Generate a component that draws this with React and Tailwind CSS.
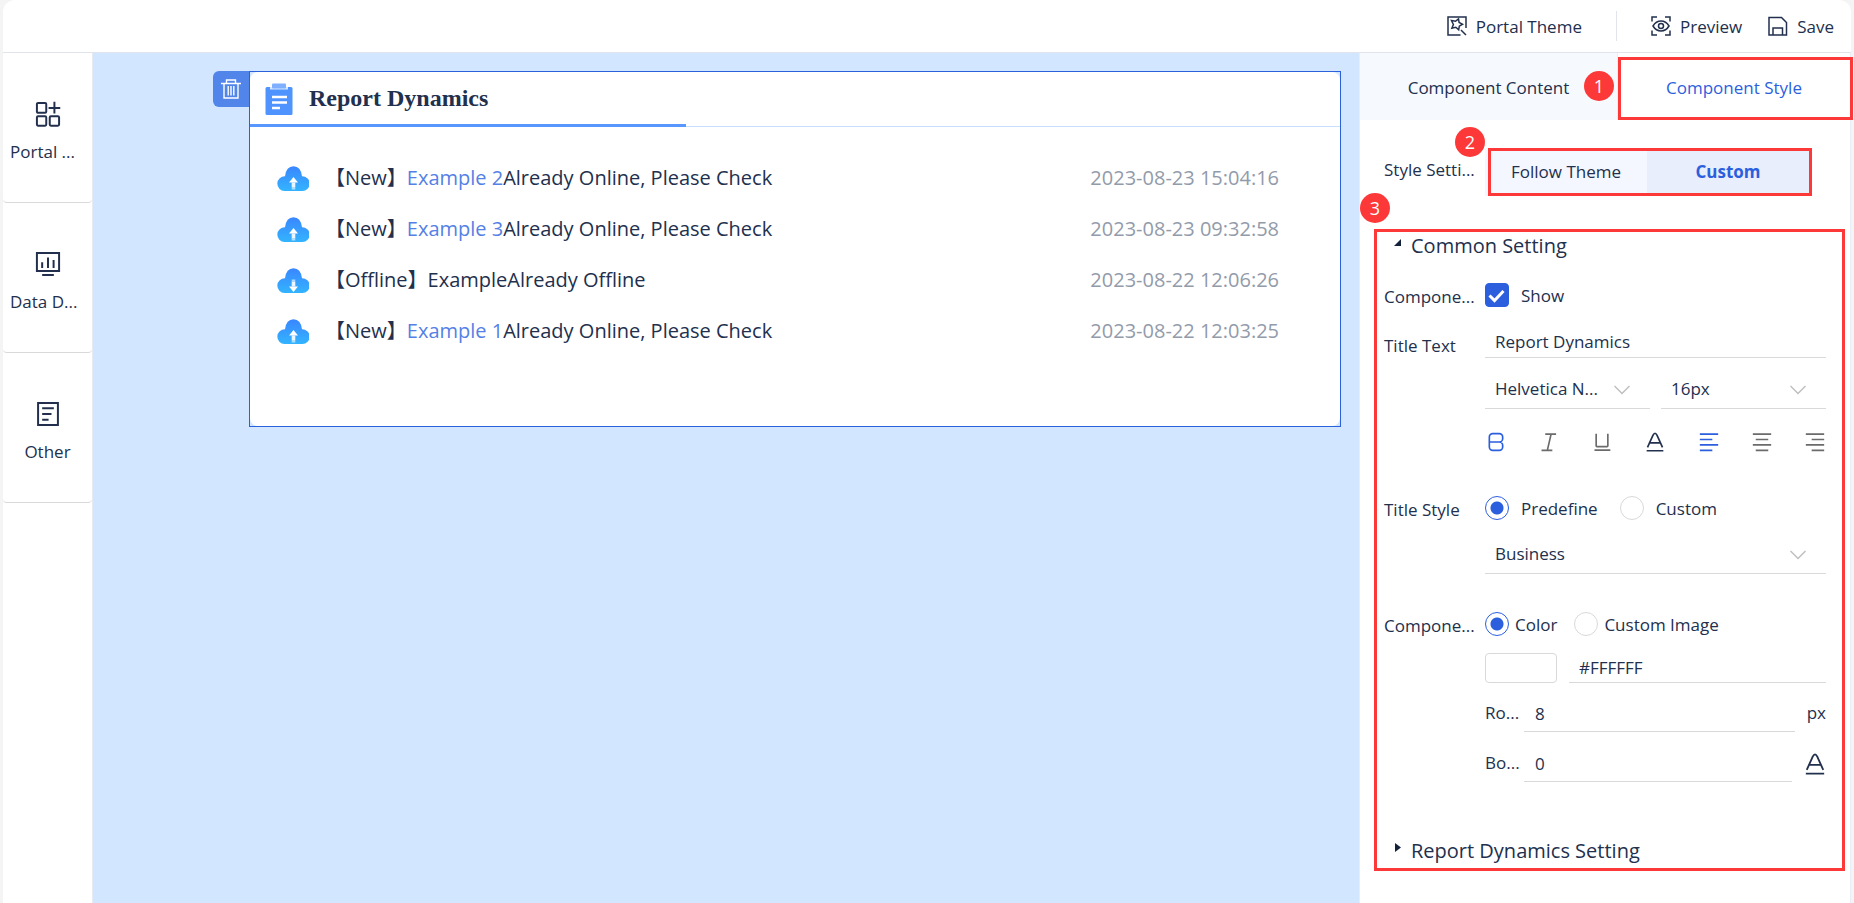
import { useState } from 'react';

/**
 * Line icons
 */
function Svg({ size = 24, width = 1.5, className = '', children }) {
    return (
        <svg
            viewBox="0 0 24 24"
            width={size}
            height={size}
            fill="none"
            stroke="currentColor"
            strokeWidth={width}
            className={`shrink-0 ${className}`}
            aria-hidden="true"
        >
            {children}
        </svg>
    );
}

const ThemeIcon = () => (
    <Svg>
        <path d="M21 14V3H3v18h12.500" />
        <path d="M6.500 6.500l4 .8 3-2.500.6 3.700 3.400 1.700-3.200 1.900-.6 3.700-2.900-2.500-3.900.9 1.500-3.700z" />
        <path d="M16 16l5 5" />
    </Svg>
);

const PreviewIcon = () => (
    <Svg>
        <path d="M3 7.500V3h5M16 3h5v4.500M21 16.500V21h-5M8 21H3v-4.500" />
        <path d="M4 12c2-3.300 4.800-5 8-5s6 1.700 8 5c-2 3.300-4.800 5-8 5s-6-1.700-8-5z" />
        <circle cx="12" cy="12" r="2.500" />
    </Svg>
);

const SaveIcon = () => (
    <Svg>
        <path d="M3 3.500h12.500L20.500 8.500V21H3z" />
        <path d="M7 21v-7h9.500v7" />
    </Svg>
);

const PortalIcon = () => (
    <Svg size={28} width={1.7}>
        <rect x="2.500" y="2.500" width="8" height="8.500" rx="1" />
        <rect x="2.500" y="14" width="8" height="8" rx="1" />
        <rect x="13.500" y="14" width="8" height="8" rx="1" />
        <path d="M17.500 1.500v10M12.500 6.800h10" />
    </Svg>
);

const DataIcon = () => (
    <Svg size={28} width={1.7}>
        <path d="M2.500 2.500h19v15.500h-19z" />
        <path d="M7 10.500v5M12 6.500v9M16.800 8.500v7M7 21.500h10" />
    </Svg>
);

const OtherIcon = () => (
    <Svg size={28} width={1.7}>
        <path d="M3.500 2.500h17v19h-17z" />
        <path d="M7 7h10M7 12h8M7 17h5.500" />
    </Svg>
);

const TrashIcon = () => (
    <Svg size={24} width={1.4}>
        <path d="M2 6.500h20M7.500 6V3h9v3M5 7v14h14V7M9.200 9v9.500M12 9v9.500M14.800 9v9.500" />
    </Svg>
);

const ClipboardIcon = () => (
    <svg viewBox="0 0 28 32" width="28" height="32" className="shrink-0" aria-hidden="true">
        <rect x="0.500" y="4" width="27" height="28" rx="1.500" fill="#4f93ff" />
        <path d="M5 4h18v2.500H5z" fill="#d7e6ff" />
        <rect x="7" y="0.500" width="14" height="5" rx="1" fill="#7eb0ff" />
        <path d="M7 14h15M7 19.500h15M7 25h8" stroke="#fff" strokeWidth="2.600" />
    </svg>
);

function CloudIcon({ down }) {
    return (
        <svg viewBox="0 0 32 30" width="32" height="30" className="shrink-0" aria-hidden="true">
            <defs>
                <linearGradient id="cloud" x1="0" y1="0" x2="0" y2="1">
                    <stop offset="0" stopColor="#3a86ff" />
                    <stop offset="1" stopColor="#33b4ff" />
                </linearGradient>
            </defs>
            <path
                d="M7.500 28A7.400 7.400 0 0 1 8 13.200Q9.200 3.200 16.500 3.200t8.500 10A7.400 7.400 0 0 1 25.500 28z"
                fill="url(#cloud)"
            />
            <g fill="#fff" transform={down ? 'matrix(1 0 0 -1 0 41)' : undefined}>
                <path d="M12 19.500L16.500 14l4.500 5.500z" />
                <path d="M14.700 19.500h3.600v4.500h-3.600z" opacity="0.900" />
                <path d="M14.700 24h3.600v2.500h-3.600z" opacity="0.600" />
            </g>
        </svg>
    );
}

const FONT_COLOR = 'M3 18.500L9.500 4Q12 -1 14.500 4L21 18.500M5.500 13h13M2 22.500h20';

const TOOLS = [
    { name: 'Bold', color: 'text-[#2b5fde]', path: 'M8 2h8a4 4 0 0 1 4 4v2a4 4 0 0 1-4 4H4V6a4 4 0 0 1 4-4zM4 12h12a4 4 0 0 1 4 4v2a4 4 0 0 1-4 4H8a4 4 0 0 1-4-4z' },
    { name: 'Italic', color: 'text-[#6b6b6b]', path: 'M7.500 2.500h13M3 22h13M14.500 2.500L10 22' },
    { name: 'Underline', color: 'text-[#6b6b6b]', path: 'M5 2v14.500a1 1 0 0 0 1 1h12a1 1 0 0 0 1-1V2M3 21.800h19' },
    { name: 'Font color', color: 'text-[#22304d]', path: FONT_COLOR },
    { name: 'Align left', color: 'text-[#2b5fde]', path: 'M1 2.500h22M1 9h15M1 15.500h22M1 22h15' },
    { name: 'Align center', color: 'text-[#6b6b6b]', path: 'M1 2.500h22M4.500 9h15M1 15.500h22M4.500 22h15' },
    { name: 'Align right', color: 'text-[#6b6b6b]', path: 'M1 2.500h22M8 9h15M1 15.500h22M8 22h15' }
];

const NAV = [
    { label: 'Portal ...', Icon: PortalIcon, align: 'text-left' },
    { label: 'Data D...', Icon: DataIcon, align: 'text-left' },
    { label: 'Other', Icon: OtherIcon, align: 'text-center' }
];

const REPORTS = [
    { tag: '【New】', link: 'Example 2', text: 'Already Online, Please Check', time: '2023-08-23 15:04:16' },
    { tag: '【New】', link: 'Example 3', text: 'Already Online, Please Check', time: '2023-08-23 09:32:58' },
    { tag: '【Offline】', text: 'ExampleAlready Offline', time: '2023-08-22 12:06:26', down: true },
    { tag: '【New】', link: 'Example 1', text: 'Already Online, Please Check', time: '2023-08-22 12:03:25' }
];

/**
 * Red step marks
 */
function Badge({ className, children }) {
    return (
        <span className={`absolute z-10 flex h-[30px] w-[30px] items-center justify-center rounded-full bg-[#fd3838] text-lg leading-6 font-normal text-white ${className}`}>
            {children}
        </span>
    );
}

function Frame({ className = 'inset-0' }) {
    return <span className={`pointer-events-none absolute border-3 border-[#fd3838] ${className}`} />;
}

/**
 * Form parts
 */
function Row({ label, className = '', children }) {
    return (
        <div className={`flex items-center ${className}`}>
            <span className="w-[101px] shrink-0 pt-1 whitespace-nowrap">{label}</span>
            <div className="flex min-w-0 flex-1 items-center">{children}</div>
        </div>
    );
}

function Select({ label, value }) {
    return (
        <div className="relative h-9 min-w-0 flex-1 border-b border-[#d9d9d9]">
            <select aria-label={label} className="h-full w-full appearance-none bg-transparent pb-1 pl-[10px] outline-none">
                <option>{value}</option>
            </select>
            <svg viewBox="0 0 16 10" width="16" height="10" fill="none" stroke="#bfbfbf" strokeWidth="1.500" className="pointer-events-none absolute top-3 right-5" aria-hidden="true">
                <path d="M0.500 1L8 8.500 15.500 1" />
            </svg>
        </div>
    );
}

function Radio({ name, label, gap, checked, onChange }) {
    return (
        <label className={`flex items-center whitespace-nowrap ${gap}`}>
            <input
                type="radio"
                name={name}
                checked={checked}
                onChange={onChange}
                className="h-6 w-6 shrink-0 appearance-none rounded-full border border-[#d9d9d9] bg-white checked:border-[#2b5fde] checked:bg-[radial-gradient(circle,#2b5fde_6px,white_7px)]"
            />
            <span className="pt-0.5">{label}</span>
        </label>
    );
}

function Settings() {
    const [show, setShow] = useState(true);
    const [titleStyle, setTitleStyle] = useState('predefine');
    const [background, setBackground] = useState('color');

    return (
        <section className="relative mt-[33px] mr-[5px] ml-[14px] pr-[19px] pb-0.5 pl-[10px]">
            <Frame />
            <Badge className="-top-9 -left-[14px]">3</Badge>

            <button className="flex h-[34px] items-center gap-[10px] pl-[10px] text-xl">
                <svg viewBox="0 0 7 7" width="7" height="7" className="mb-2" aria-hidden="true">
                    <path d="M7 0v7H0z" fill="#14213d" />
                </svg>
                Common Setting
            </button>

            <Row label="Compone..." className="mt-2 h-12">
                <label className="flex items-center gap-3">
                    <span className="relative flex">
                        <input
                            type="checkbox"
                            checked={show}
                            onChange={e => setShow(e.target.checked)}
                            className="h-6 w-6 appearance-none rounded-sm border border-[#d9d9d9] checked:border-[#2b5fde] checked:bg-[#2b5fde]"
                        />
                        {show && (
                            <svg viewBox="0 0 24 24" width="24" height="24" fill="none" stroke="#fff" strokeWidth="3" className="pointer-events-none absolute inset-0" aria-hidden="true">
                                <path d="M4.500 12.500l5 5L18.500 8" />
                            </svg>
                        )}
                    </span>
                    <span className="pt-0.5">Show</span>
                </label>
            </Row>

            <div className="mt-[3px] flex items-end">
                <label htmlFor="title-text" className="w-[101px] shrink-0">Title Text</label>
                <input id="title-text" defaultValue="Report Dynamics" className="h-9 min-w-0 flex-1 border-b border-[#d9d9d9] pt-1 pl-[10px] outline-none" />
            </div>

            <div className="mt-[15px] ml-[101px] flex gap-[11px]">
                <Select label="Font family" value="Helvetica N..." />
                <Select label="Font size" value="16px" />
            </div>

            <div className="mt-[13px] ml-[101px] flex h-10 items-center justify-between">
                {TOOLS.map(tool => (
                    <button key={tool.name} aria-label={tool.name} className={`p-px ${tool.color}`}>
                        <Svg size={20} width={2}>
                            <path d={tool.path} />
                        </Svg>
                    </button>
                ))}
            </div>

            <Row label="Title Style" className="mt-[22px] h-12">
                <div className="flex gap-[22px]">
                    <Radio name="title-style" label="Predefine" gap="gap-3" checked={titleStyle === 'predefine'} onChange={() => setTitleStyle('predefine')} />
                    <Radio name="title-style" label="Custom" gap="gap-3" checked={titleStyle === 'custom'} onChange={() => setTitleStyle('custom')} />
                </div>
            </Row>
            <div className="mt-[6px] ml-[101px] flex">
                <Select label="Predefined style" value="Business" />
            </div>

            <Row label="Compone..." className="mt-[26px] h-12">
                <div className="flex gap-[17px]">
                    <Radio name="background" label="Color" gap="gap-[6px]" checked={background === 'color'} onChange={() => setBackground('color')} />
                    <Radio name="background" label="Custom Image" gap="gap-[6px]" checked={background === 'image'} onChange={() => setBackground('image')} />
                </div>
            </Row>
            <div className="mt-[5px] ml-[101px] flex gap-3">
                <button aria-label="Pick color" className="h-[30px] w-[72px] rounded-sm border border-[#d9d9d9] bg-white" />
                <input aria-label="Color value" defaultValue="#FFFFFF" className="h-[30px] min-w-0 flex-1 border-b border-[#d9d9d9] pl-[10px] outline-none" />
            </div>

            <div className="mt-[13px] ml-[101px] flex items-center">
                <label htmlFor="rounded" className="w-[39px] pb-0.5">Ro...</label>
                <input id="rounded" defaultValue="8" className="h-9 min-w-0 flex-1 border-b border-[#d9d9d9] pl-[11px] outline-none" />
                <span className="w-[31px] pb-0.5 text-right">px</span>
            </div>
            <div className="mt-[14px] ml-[101px] flex items-center">
                <label htmlFor="border" className="w-[39px] pb-0.5">Bo...</label>
                <input id="border" defaultValue="0" className="h-9 min-w-0 flex-1 border-b border-[#d9d9d9] pl-[11px] outline-none" />
                <button aria-label="Border color" className="ml-3">
                    <Svg size={22} width={2}>
                        <path d={FONT_COLOR} />
                    </Svg>
                </button>
            </div>

            <button className="mt-[51px] flex h-9 items-center gap-[10px] pl-[10px] text-xl">
                <svg viewBox="0 0 7 9" width="7" height="9" className="mb-2" aria-hidden="true">
                    <path d="M1 0l6 4.500L1 9z" fill="#14213d" />
                </svg>
                Report Dynamics Setting
            </button>
        </section>
    );
}

export default function App() {
    return (
        <div className="min-h-screen bg-[#f4f4f5] px-[3px] font-['Open_Sans','Noto_Sans_CJK_SC',sans-serif] text-[17px] leading-6 text-[#22304d]">
            <div className="flex min-h-screen flex-col overflow-clip rounded-t-xl bg-white [overflow-clip-margin:4px]">
                {/* Top bar */}
                <header className="flex h-[53px] shrink-0 items-center justify-end border-b border-[#e1e4ed] pr-[17px]">
                    <button className="flex items-center gap-[7px]">
                        <ThemeIcon />
                        <span className="pt-0.5">Portal Theme</span>
                    </button>
                    <span className="mr-8 ml-[34px] h-[30px] w-px bg-[#e1e4ed]" />
                    <button className="flex items-center gap-[7px]">
                        <PreviewIcon />
                        <span className="pt-0.5">Preview</span>
                    </button>
                    <button className="ml-6 flex items-center gap-[7px]">
                        <SaveIcon />
                        <span className="pt-0.5">Save</span>
                    </button>
                </header>

                <div className="flex flex-1">
                    {/* Component list */}
                    <nav className="w-[90px] shrink-0 border-r border-[#e8eaf2]">
                        {NAV.map(({ label, Icon, align }) => (
                            <button key={label} className="flex h-[150px] w-full flex-col items-center justify-center gap-3 rounded-b border-b border-[#d9d9d9] pt-2 whitespace-nowrap">
                                <Icon />
                                <span className={`w-full px-[7px] ${align}`}>{label}</span>
                            </button>
                        ))}
                    </nav>

                    {/* Canvas */}
                    <main className="flex flex-1 items-start bg-[#d3e6ff] pt-[18px] pr-[18px] pl-[120px]">
                        <button aria-label="Delete" className="flex h-9 w-9 shrink-0 items-center justify-center rounded-l-md bg-[#5185ea] text-white">
                            <TrashIcon />
                        </button>
                        <article className="flex-1 border border-[#2b62dc]">
                            <div className="min-h-[354px] rounded-lg bg-white">
                                <div className="flex h-[55px] items-center gap-4 border-b border-[#c9dfff] pl-[15px]">
                                    <ClipboardIcon />
                                    <h2 className="pb-0.5 font-['Liberation_Serif',serif] text-2xl font-bold">Report Dynamics</h2>
                                </div>
                                <div className="-mt-[3px] h-[3px] w-2/5 bg-[#5897ff]" />
                                <ul className="pt-[25px] pr-[61px] pl-[27px] text-[20px]">
                                    {REPORTS.map(item => (
                                        <li key={item.time} className="flex h-[51px] items-center">
                                            <CloudIcon down={item.down} />
                                            <p className="ml-4 flex-1">
                                                {item.tag}
                                                {item.link && <a href="#" className="text-[#5580e5]">{item.link}</a>}
                                                {item.text}
                                            </p>
                                            <time className="text-[#929baa]">{item.time}</time>
                                        </li>
                                    ))}
                                </ul>
                            </div>
                        </article>
                    </main>

                    {/* Property panel */}
                    <aside className="w-[492px] shrink-0 border-x border-[#e8edf7]">
                        <div className="flex h-[67px]">
                            <button className="relative w-[258px] border-r border-[#e8edf7] bg-[#f6fafe] pt-0.5">
                                Component Content
                                <Badge className="top-[18px] right-[3px]">1</Badge>
                            </button>
                            <button className="relative flex-1 pt-0.5 text-[#2b5fde]">
                                Component Style
                                <Frame className="top-1 -right-[3px] bottom-0 left-0" />
                            </button>
                        </div>

                        <div className="mt-7 flex items-center pl-6">
                            <span className="w-[101px] shrink-0 pb-1 whitespace-nowrap">Style Setti...</span>
                            <div className="relative flex h-12 w-[324px]">
                                <button className="flex-1 bg-[#f4f7ff]">Follow Theme</button>
                                <button className="flex-1 rounded bg-[#e8eefb] font-bold text-[#2b5fde]">Custom</button>
                                <Frame className="inset-y-0 -right-[3px] left-[3px]" />
                                <Badge className="-top-[21px] -left-[30px]">2</Badge>
                            </div>
                        </div>

                        <Settings />
                    </aside>
                </div>
            </div>
        </div>
    );
}
